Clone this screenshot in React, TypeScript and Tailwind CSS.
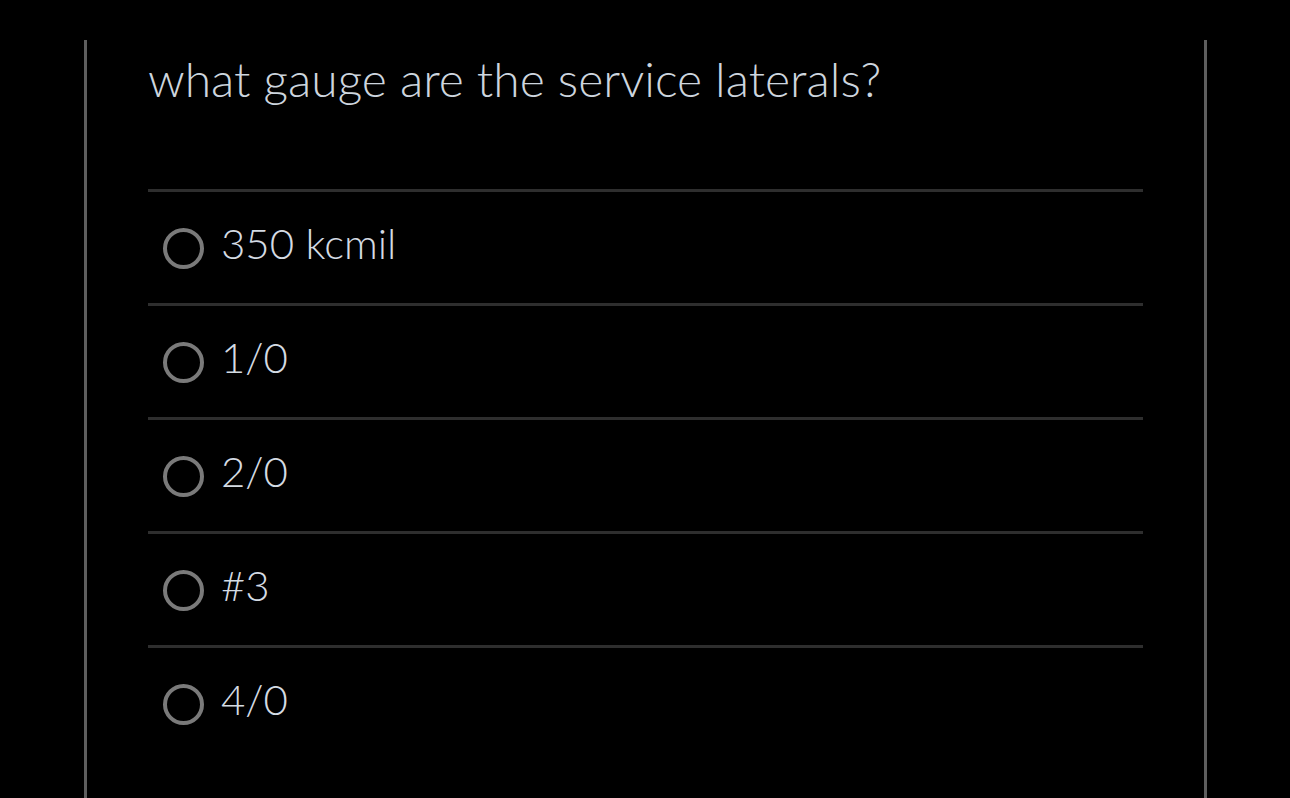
const options = ['350 kcmil', '1/0', '2/0', '#3', '4/0'];

export default function App() {
  return (
    <div className="w-[1290px] h-[798px] bg-black overflow-hidden font-['Lato','Noto_Sans',sans-serif]">
      <div className="ml-[84px] mt-[40px] w-[1123px] h-[758px] border-x-[3px] border-[#5e5e5e] px-[61px]">
        <h1 className="pt-[9px] h-[149px] text-[48px] font-light text-[#cdd5de] leading-[60px]">
          what gauge are the service laterals?
        </h1>
        <ul>
          {options.map((o) => (
            <li
              key={o}
              className="h-[114px] border-t-[3px] border-[#2e2e2e] flex items-center pl-[15px] gap-[17px]"
            >
              <span className="w-[41px] h-[41px] rounded-full border-[4px] border-[#7a7a7a] mt-[1px] shrink-0" />
              <span className="text-[42px] font-light text-[#d4dbe3] leading-none mb-[10px]">{o}</span>
            </li>
          ))}
        </ul>
      </div>
    </div>
  );
}
